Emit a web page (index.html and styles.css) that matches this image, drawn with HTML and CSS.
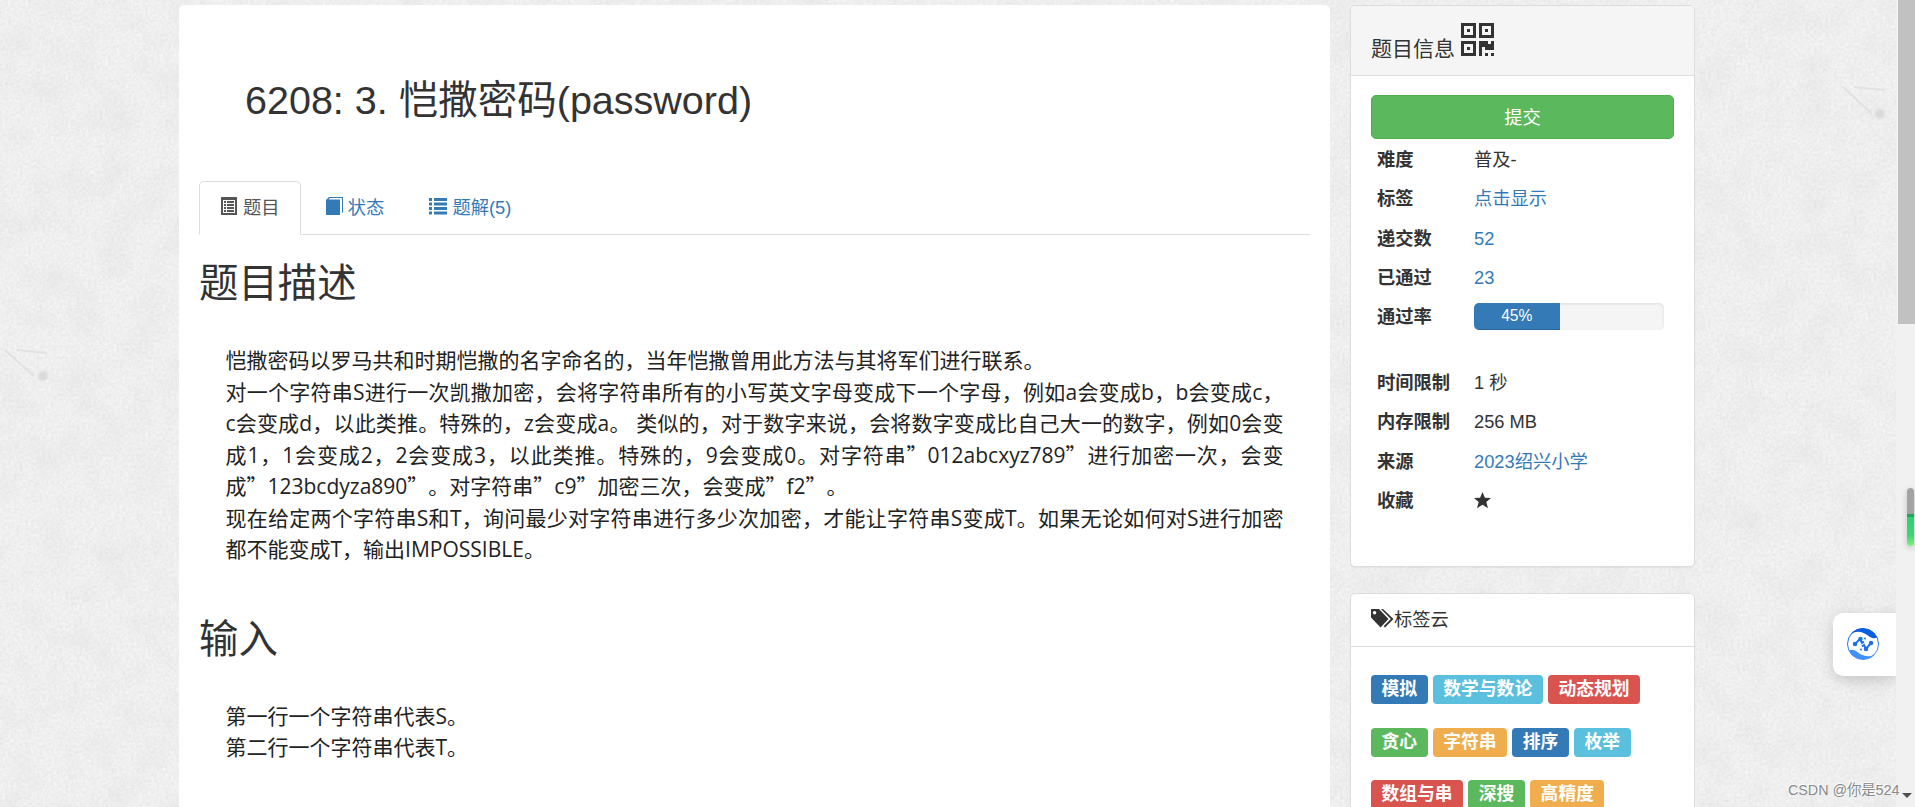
FILE: index.html
```html
<!DOCTYPE html>
<html lang="zh-CN">
<head>
    <meta charset="utf-8">
    <title>6208: 3. 恺撒密码(password)</title>
    <link rel="stylesheet" href="styles.css">
</head>
<body>
    <!-- paper texture behind the page -->
    <svg class="texture" width="1896" height="807">
        <filter id="grain" x="0" y="0" width="100%" height="100%" color-interpolation-filters="sRGB">
            <feTurbulence type="fractalNoise" baseFrequency="0.35" numOctaves="3" seed="4"/>
            <feColorMatrix values="0.08 0 0 0 0.897  0.08 0 0 0 0.897  0.08 0 0 0 0.897  0 0 0 0 1"/>
        </filter>
        <filter id="stain" x="0" y="0" width="100%" height="100%" color-interpolation-filters="sRGB">
            <feTurbulence type="fractalNoise" baseFrequency="0.03" numOctaves="5" seed="9"/>
            <feColorMatrix values="0 0 0 0 0.78  0 0 0 0 0.78  0 0 0 0 0.78  0.35 0 0 0 -0.15"/>
        </filter>
        <rect width="1896" height="807" filter="url(#grain)"/>
        <rect width="1896" height="807" filter="url(#stain)"/>
        <g fill="#dadada" stroke="#e2e2e2" stroke-width="2">
            <circle cx="1880" cy="114" r="4.500"/>
            <path d="M1843 87l29 27M1854 87l30 3" fill="none"/>
            <circle cx="43" cy="376" r="4.500"/>
            <path d="M5 350l29 26M17 350l30 3" fill="none"/>
        </g>
    </svg>

    <div class="page">
        <div class="problem">
            <h2 class="title">6208: 3. 恺撒密码(password)</h2>

            <ul class="tabs">
                <li class="active">
                    <a href="#"><svg class="icon" viewBox="0 0 18 18"><path fill-rule="evenodd" d="M1 0h16v18H1zM3 3v13h12V3z"/><path d="M4 4h2v2H4zM7 4h7v2H7zM4 7h2v2H4zM7 7h7v2H7zM4 10h2v2H4zM7 10h7v2H7zM4 13h2v2H4zM7 13h7v2H7z"/></svg> 题目</a>
                </li>
                <li>
                    <a href="#"><svg class="icon" viewBox="0 0 18 18"><path d="M1 3l3-3h14v15l-1 1V1H5L3.500 2.500H15V18H1z"/></svg> 状态</a>
                </li>
                <li>
                    <a href="#"><svg class="icon" viewBox="0 0 18 18"><path d="M0 1h3v3H0zM5 1h13v3H5zM0 5.500h3v3H0zM5 5.500h13v3H5zM0 10h3v3H0zM5 10h13v3H5zM0 14.500h3v3H0zM5 14.500h13v3H5z"/></svg> 题解(5)</a>
                </li>
            </ul>

            <h2>题目描述</h2>
            <div class="content">
                <p>恺撒密码以罗马共和时期恺撒的名字命名的，当年恺撒曾用此方法与其将军们进行联系。</p>
                <p class="full">对一个字符串S进行一次凯撒加密，会将字符串所有的小写英文字母变成下一个字母，例如a会变成b，b会变成c，</p>
                <p class="full">c会变成d，以此类推。特殊的，z会变成a。 类似的，对于数字来说，会将数字变成比自己大一的数字，例如0会变</p>
                <p class="full">成1，1会变成2，2会变成3，以此类推。特殊的，9会变成0。对字符串<q>”</q>012abcxyz789<q>”</q>进行加密一次，会变</p>
                <p>成<q>”</q>123bcdyza890<q>”</q>。对字符串<q>”</q>c9<q>”</q>加密三次，会变成<q>”</q>f2<q>”</q>。</p>
                <p class="full">现在给定两个字符串S和T，询问最少对字符串进行多少次加密，才能让字符串S变成T。如果无论如何对S进行加密</p>
                <p>都不能变成T，输出IMPOSSIBLE。</p>
            </div>

            <h2>输入</h2>
            <div class="content">
                <p>第一行一个字符串代表S。</p>
                <p>第二行一个字符串代表T。</p>
            </div>
        </div>

        <div class="sidebar">
            <div class="panel info">
                <div class="panel-heading">
                    题目信息
                    <svg class="qrcode" viewBox="0 0 33 33"><path fill-rule="evenodd" d="M0 0h15v15H0zM3 3v9h9V3zM18 0h15v15H18zM21 3v9h9V3zM0 18h15v15H0zM3 21v9h9v-9z"/><path d="M6 6h3v3H6zM24 6h3v3h-3zM6 24h3v3H6zM18 18h9v3h3v-3h3v9h-9v-3h-3v9h-3zM24 30h3v3h-3zM30 30h3v3h-3z"/></svg>
                </div>
                <div class="panel-body">
                    <a href="#" class="submit">提交</a>
                    <dl>
                        <dt>难度</dt><dd>普及-</dd>
                        <dt>标签</dt><dd><a href="#">点击显示</a></dd>
                        <dt>递交数</dt><dd><a href="#">52</a></dd>
                        <dt>已通过</dt><dd><a href="#">23</a></dd>
                        <dt class="rate">通过率</dt><dd class="rate"><div class="progress"><div class="bar" style="width: 45%">45%</div></div></dd>
                        <dt>时间限制</dt><dd>1 秒</dd>
                        <dt>内存限制</dt><dd>256 MB</dd>
                        <dt>来源</dt><dd><a href="#">2023绍兴小学</a></dd>
                        <dt>收藏</dt><dd><svg class="star" viewBox="0 0 17 17"><path d="M8.500 0l2.400 5.800 6.100.2-4.700 4 1.700 6.300-5.500-3.500L3 16.300 4.700 10 0 6l6.100-.2z"/></svg></dd>
                    </dl>
                </div>
            </div>

            <div class="panel cloud">
                <div class="panel-heading">
                    <svg class="tags-icon" viewBox="0 0 23 19"><path fill-rule="evenodd" d="M0 0h8l9.500 10-8 8.500L0 8.500zM3.500 2a1.700 1.700 0 1 0 .1 0z"/><path d="M10 0h2l10.500 10-8.500 8.500-1.400-1.300 7.200-7.200z"/></svg>标签云
                </div>
                <div class="panel-body">
                    <div class="tag-row">
                        <span class="tag blue">模拟</span>
                        <span class="tag cyan">数学与数论</span>
                        <span class="tag red">动态规划</span>
                    </div>
                    <div class="tag-row">
                        <span class="tag green">贪心</span>
                        <span class="tag orange">字符串</span>
                        <span class="tag blue">排序</span>
                        <span class="tag cyan">枚举</span>
                    </div>
                    <div class="tag-row">
                        <span class="tag red">数组与串</span>
                        <span class="tag green">深搜</span>
                        <span class="tag orange">高精度</span>
                    </div>
                </div>
            </div>
        </div>
    </div>

    <div class="float-card">
        <svg width="32" height="32" viewBox="0 0 32 32">
            <defs>
                <linearGradient id="ring" x1="0" y1="0" x2="0" y2="1">
                    <stop offset="0" stop-color="#0052d9"/>
                    <stop offset="1" stop-color="#4f9dfd"/>
                </linearGradient>
            </defs>
            <circle cx="16" cy="16" r="15.500" fill="none" stroke="url(#ring)" stroke-width="1"/>
            <path fill="#0b5ee0" d="M4 6C9-1.500 25-2 30 9.500c-3 1.500-6 .5-9-2C15 3 9 2.500 4 6z"/>
            <path fill="#3f90fa" d="M28 26C23 33.500 7 34 2 22.500c3-1.500 6-.5 9 2 6 4.500 12 5 17 1.500z"/>
            <g fill="#1f6fea" stroke="#1f6fea" stroke-width="1.500">
                <path d="M8 16l5-5 2 4 2-1.500M24 15l-5 6-2-4-2 1.500" fill="none" stroke-width="2"/>
                <circle cx="8" cy="16" r="1.500"/><circle cx="13.500" cy="11" r="1.500"/>
                <circle cx="24" cy="15" r="1.500"/><circle cx="19" cy="21" r="1.500"/>
            </g>
            <circle cx="18" cy="10.500" r="1" fill="#1f6fea"/><circle cx="14" cy="21.500" r="1" fill="#1f6fea"/>
        </svg>
    </div>

    <div class="scrollbar">
        <div class="thumb"></div>
        <div class="arrow"></div>
    </div>
    <div class="meter"></div>
    <div class="watermark">CSDN @你是524</div>
</body>
</html>
```
FILE: styles.css
```css
* {
    box-sizing: border-box;
}

body {
    margin: 0;
    height: 807px;
    overflow: hidden;
    background-color: #eeeeee;
    color: #333;
    font-family: "Liberation Sans", Arial, "Noto Sans CJK SC", sans-serif;
    font-size: 18.3px;
    line-height: 26px;
}

a {
    color: #337ab7;
    text-decoration: none;
}

svg {
    fill: currentColor;
}

.texture {
    position: absolute;
    top: 0;
    left: 0;
}

.page {
    position: relative;
    display: flex;
    gap: 20px;
    height: 807px;
    padding: 5px 0 0 179px;
    overflow: hidden;
}

/* Left column */
.problem {
    width: 1151px;
    padding: 0 20px;
    background-color: #fff;
    border-radius: 5px 5px 0 0;
}

h2 {
    margin: 0;
    font-size: 39.4px;
    font-weight: normal;
    line-height: 43px;
}

.title {
    padding: 74px 0 59px 46px;
    font-size: 39.5px;
}

.tabs {
    display: flex;
    gap: 3px;
    height: 54px;
    margin: 0 0 27px;
    padding: 0;
    list-style: none;
    border-bottom: 1px solid #ddd;
}

.tabs a {
    display: block;
    height: 54px;
    padding: 13px 20px;
    border: 1px solid transparent;
    border-radius: 5px 5px 0 0;
    white-space: nowrap;
}

.tabs .active a {
    color: #555;
    background-color: #fff;
    border-color: #ddd;
    border-bottom-color: #fff;
}

.icon {
    width: 18px;
    height: 18px;
    vertical-align: -1px;
}

.content {
    padding: 40px 26.5px 52px;
    color: #222;
    font-family: "Open Sans", "Noto Sans CJK SC", sans-serif;
    font-size: 21px;
    line-height: 31.5px;
    text-spacing-trim: space-all;
    white-space: nowrap;
}

.content p {
    height: 31.5px;
    margin: 0;
}

.content .full {
    text-align: justify;
    text-align-last: justify;
    white-space: normal;
}

/* full width quotes */
.content q {
    font-family: "Noto Sans CJK SC", sans-serif;
    line-height: 1;
    quotes: none;
}

/* Right column */
.sidebar {
    width: 345px;
}

.panel {
    margin-bottom: 26px;
    background-color: #fff;
    border: 1px solid #ddd;
    border-radius: 5px;
    box-shadow: 0 1px 1px rgba(0, 0, 0, 0.05);
}

.panel-heading {
    padding: 13px 20px;
    border-bottom: 1px solid #ddd;
}

.info {
    height: 562px;
}

.info .panel-heading {
    height: 70px;
    padding-top: 17px;
    background-color: #f5f5f5;
    border-radius: 4px 4px 0 0;
    font-size: 21px;
    line-height: 34px;
}

.qrcode {
    width: 33px;
    height: 33px;
}

.info .panel-body {
    padding: 19px 20px;
}

.submit {
    display: block;
    height: 44px;
    line-height: 43px;
    text-align: center;
    color: #fff;
    background-color: #5cb85c;
    border: 1px solid #4cae4c;
    border-radius: 5px;
}

dl {
    display: grid;
    grid-template-columns: 97px 190px;
    margin: 0;
    padding: 1px 0 0 6px;
}

dt, dd {
    height: 39.3px;
    margin: 0;
    line-height: 39px;
}

dt {
    font-weight: bold;
}

.rate {
    height: 66px;
}

.progress {
    height: 27px;
    margin-top: 6px;
    background-color: #f5f5f5;
    border-radius: 5px;
    box-shadow: inset 0 1px 3px rgba(0, 0, 0, 0.1);
    overflow: hidden;
}

.bar {
    height: 100%;
    color: #fff;
    background-color: #337ab7;
    box-shadow: inset 0 -1px 0 rgba(0, 0, 0, 0.15);
    font-size: 15.6px;
    line-height: 25px;
    text-align: center;
}

.star {
    width: 17px;
    height: 17px;
    vertical-align: -2px;
}

.cloud {
    height: 400px;
}

.cloud .panel-heading {
    height: 53px;
}

.tags-icon {
    width: 23px;
    height: 19px;
    vertical-align: -2px;
}

.cloud .panel-body {
    display: flex;
    flex-direction: column;
    gap: 23.5px;
    padding: 28px 20px;
}

.tag-row {
    display: flex;
    gap: 5.2px;
}

.tag {
    height: 29px;
    padding: 0 10.5px;
    border-radius: 4px;
    color: #fff;
    font-size: 17.8px;
    font-weight: bold;
    line-height: 28px;
}

.blue { background-color: #337ab7; }
.cyan { background-color: #5bc0de; }
.red { background-color: #d9534f; }
.green { background-color: #5cb85c; }
.orange { background-color: #f0ad4e; }

/* Things that float over the page */
.float-card {
    position: absolute;
    top: 613px;
    left: 1833px;
    width: 63px;
    height: 63px;
    padding: 15px 14px;
    background-color: #fff;
    border-radius: 10px 0 0 10px;
    box-shadow: 0 4px 14px rgba(0, 0, 0, 0.16);
}

.scrollbar {
    position: absolute;
    top: 0;
    right: 0;
    display: flex;
    flex-direction: column;
    justify-content: space-between;
    width: 19px;
    height: 807px;
    padding: 0 0 9px 2px;
    background-color: #f1f1f1;
}

.thumb {
    height: 324px;
    background-color: #c1c1c1;
}

.arrow {
    width: 10px;
    margin-left: 4px;
    border: 5px solid transparent;
    border-top-color: #505050;
    border-bottom: 0;
}

.meter {
    position: absolute;
    top: 488px;
    left: 1907px;
    width: 7px;
    height: 58px;
    border-radius: 4px;
    background: linear-gradient(#a3a3a3 26px, #1ea85a 26px, #1ea85a 29px, #2bcf72 29px, #3fd873 48px, #83f084);
    box-shadow: 0 2px 6px rgba(0, 0, 0, 0.2);
}

.watermark {
    position: absolute;
    top: 777px;
    left: 1788px;
    color: #8a8a8a;
    font-size: 14.3px;
    text-shadow: -1px -1px 0 #fff;
    white-space: nowrap;
}
```
